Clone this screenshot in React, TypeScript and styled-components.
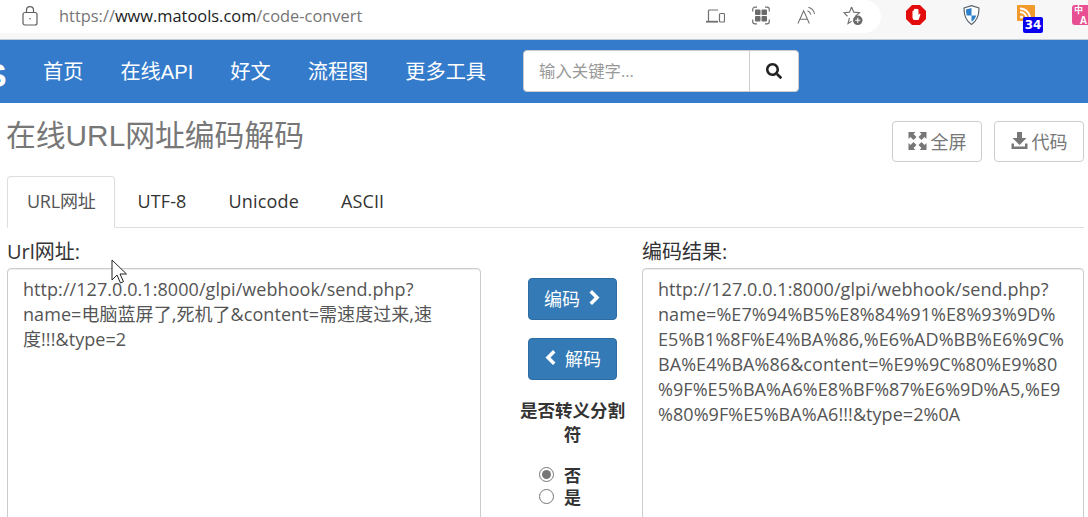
import React from "react";
import styled, { createGlobalStyle } from "styled-components";
import { FaSearch } from "react-icons/fa";

const YAHEI = `"Open Sans", "Noto Sans CJK SC", sans-serif`;
const SEGOE = `"Open Sans", "Noto Sans", sans-serif`;

const Global = createGlobalStyle`
  html, body { margin: 0; padding: 0; background: #fff; }
  * { box-sizing: border-box; }
`;

const Page = styled.div`
  position: relative;
  width: 1088px;
  height: 517px;
  overflow: hidden;
  font-family: ${YAHEI};
  color: #333;
  background: #fff;
`;

const Chrome = styled.div`
  height: 40px;
  display: flex;
  align-items: flex-start;
  background: #f7f7f7;
  border-bottom: 1px solid #c4ccd6;
`;

const AddressBar = styled.div`
  width: 901px;
  height: 33px;
  flex: none;
  margin-left: -20px;
  padding: 0 18px 2px 42px;
  display: flex;
  align-items: center;
  background: #fff;
  border-radius: 0 17px 17px 0;
`;

const Url = styled.div`
  margin-left: 21px;
  flex: 1;
  font: 16.4px ${SEGOE};
  color: #767676;
  white-space: nowrap;
`;

const UrlHost = styled.span`
  color: #1c1c1c;
`;

const BarIcons = styled.div`
  display: flex;
  align-items: center;
  gap: 27px;
`;

const Extensions = styled.div`
  display: flex;
  align-items: flex-start;
  flex: none;
  gap: 37px;
  margin-left: 25px;
  padding-top: 5px;
`;

const RssWrap = styled.div`
  position: relative;
  width: 18px;
  height: 20px;
`;

const Badge = styled.span`
  position: absolute;
  left: 6px;
  top: 12px;
  width: 20px;
  height: 16px;
  border-radius: 2px;
  background: #0a00f0;
  color: #fff;
  font: bold 12px/16px "DejaVu Sans", sans-serif;
  text-align: center;
`;

const Navbar = styled.nav`
  height: 63px;
  display: flex;
  align-items: center;
  background: #347bcb;
  color: #fff;
`;

const Brand = styled.span`
  width: 43px;
  margin-left: -16px;
  flex: none;
  font-family: "Liberation Sans", sans-serif;
  font-size: 34px;
  line-height: 40px;
  font-weight: bold;
  position: relative;
  top: 3px;
`;

const NavLinks = styled.div`
  display: flex;
  gap: 37px;
  width: 480px;
  flex: none;
  margin-left: 16px;
`;

const NavLink = styled.a`
  font-family: "Liberation Sans", "Noto Sans CJK SC", sans-serif;
  font-size: 20.2px;
  line-height: 28px;
  color: #fff;
  white-space: nowrap;
`;

const Search = styled.div`
  display: flex;
  width: 276px;
  height: 42px;
  background: #fff;
  border: 1px solid #ccc;
  border-radius: 4px;
  margin-bottom: 1px;
`;

const SearchInput = styled.div`
  width: 226px;
  padding-left: 15px;
  font-size: 16.4px;
  line-height: 40px;
  color: #999;
  border-right: 1px solid #ccc;
`;

const SearchBtn = styled.div`
  flex: 1;
  display: flex;
  align-items: center;
  justify-content: center;
  color: #222;
  font-size: 16px;
`;

const Main = styled.main`
  padding: 0 4px 0 7px;
`;

const Header = styled.div`
  height: 73px;
  display: flex;
  justify-content: space-between;
  align-items: flex-start;
`;

const Title = styled.h1`
  margin: 13px 0 0 -1px;
  font-family: "Liberation Sans", "Noto Sans CJK SC", sans-serif;
  font-size: 29.8px;
  line-height: 40px;
  font-weight: 400;
  color: #777;
`;

const Actions = styled.div`
  display: flex;
  gap: 12px;
  margin-top: 18px;
`;

const ActionBtn = styled.button`
  width: 90px;
  height: 41px;
  padding: 0 0 2px;
  display: flex;
  align-items: center;
  justify-content: center;
  gap: 4px;
  background: #fff;
  border: 1px solid #ccc;
  border-radius: 4px;
  font: 18px ${YAHEI};
  color: #777;
`;

const Tabs = styled.div`
  height: 52px;
  display: flex;
  gap: 2px;
  border-bottom: 1px solid #ddd;
`;

const Tab = styled.div<{ $active?: boolean }>`
  height: ${(p) => (p.$active ? "52px" : "51px")};
  padding: 0 19px;
  font-size: 18px;
  letter-spacing: ${(p) => (p.$active ? "-0.25px" : "0.15px")};
  line-height: 48px;
  color: ${(p) => (p.$active ? "#555" : "#333")};
  background: #fff;
  border: 1px solid ${(p) => (p.$active ? "#ddd" : "transparent")};
  border-bottom-color: ${(p) => (p.$active ? "#fff" : "transparent")};
  border-radius: 4px 4px 0 0;
`;

const Columns = styled.div`
  display: grid;
  grid-template-columns: 474px 161px 442px;
  margin-top: 10px;
`;

const Field = styled.div`
  display: flex;
  flex-direction: column;
`;

const Label = styled.label`
  height: 30px;
  font-size: 20px;
  line-height: 28px;
  color: #333;
`;

const Output = styled.div`
  height: 300px;
  padding: 8px 15px;
  background: #fff;
  border: 1px solid #ccc;
  border-radius: 4px;
  box-shadow: inset 0 1px 1px rgba(0, 0, 0, 0.075);
  font-size: 18px;
  letter-spacing: 0.06px;
  line-height: 25px;
  color: #555;
  white-space: nowrap;
`;

const Middle = styled.div`
  padding: 40px 36px 0 58px;
  display: flex;
  flex-direction: column;
  align-items: center;
`;

const ConvertBtn = styled.button`
  width: 89px;
  height: 42px;
  margin-bottom: 18px;
  padding: 0 0 3px;
  flex: none;
  display: flex;
  align-items: center;
  justify-content: center;
  gap: 8px;
  background: #337ab7;
  border: 1px solid #2e6da4;
  border-radius: 4px;
  color: #fff;
  font: 18px ${YAHEI};
`;

const EscapeTitle = styled.div`
  width: 110px;
  flex: none;
  font-size: 17.5px;
  line-height: 24px;
  font-weight: bold;
  text-align: center;
`;

const RadioList = styled.div`
  margin-top: 17px;
  width: 67px;
  display: flex;
  flex-direction: column;
`;

const RadioRow = styled.div`
  height: 22px;
  display: flex;
  align-items: center;
  gap: 10px;
  font-size: 17px;
  font-weight: bold;
`;

const Radio = styled.span<{ $checked?: boolean }>`
  width: 15px;
  height: 15px;
  flex: none;
  border-radius: 50%;
  border: 1px solid #767676;
  background: #fff;
  display: flex;
  align-items: center;
  justify-content: center;
  &::after {
    content: "";
    width: 9px;
    height: 9px;
    border-radius: 50%;
    background: ${(p) => (p.$checked ? "#767676" : "transparent")};
  }
`;

const Cursor = styled.svg`
  position: absolute;
  left: 111px;
  top: 259px;
`;

const TranslateTile = styled.div`
  width: 22px;
  height: 20px;
  flex: none;
  padding: 0 0 0 2px;
  border-radius: 3px;
  background: #e84f93;
  color: #fff;
  font-size: 9px;
  line-height: 10px;
  font-weight: bold;
`;

const TileLatin = styled.div`
  padding-left: 6px;
  font-size: 10px;
`;

const Lock = () => (
  <svg width="16" height="20" viewBox="0 0 16 20" fill="none" stroke="#5f5f5f" strokeWidth="1.2">
    <rect x="1" y="6.5" width="14" height="12.5" rx="2" />
    <path d="M4.5 6.5V4.2a3.5 3.5 0 0 1 7 0v2.3" />
    <circle cx="8" cy="12.8" r="0.8" fill="#5f5f5f" stroke="none" />
  </svg>
);

const DevicesIcon = () => (
  <svg width="19" height="14" viewBox="0 0 19 14" fill="none" stroke="#707070" strokeWidth="1.2">
    <path d="M12 1H3.500a1 1 0 0 0-1 1v10" />
    <path d="M0 12.700h12" strokeWidth="1.800" />
    <rect x="13.500" y="4.500" width="5" height="8.500" rx="1" />
  </svg>
);

const AppsIcon = () => (
  <svg width="18" height="19" viewBox="0 0 18 18" fill="none">
    <path d="M5 .7H3A2.3 2.3 0 0 0 .7 3v2M13 .7h2A2.3 2.3 0 0 1 17.300 3v2M5 17.300H3A2.300 2.300 0 0 1 .7 15v-2M13 17.300h2a2.300 2.300 0 0 0 2.300-2.300v-2" stroke="#707070" strokeWidth="1.2" />
    <rect x="3" y="3" width="5.500" height="5.500" rx="1" fill="#6a6a6a" />
    <rect x="9.500" y="3" width="5.500" height="5.500" rx="1" fill="#6a6a6a" />
    <rect x="3" y="9.500" width="5.500" height="5.500" rx="1" fill="#6a6a6a" />
    <rect x="9.500" y="9.500" width="5.500" height="5.500" rx="1" fill="#6a6a6a" />
  </svg>
);

const ReadAloudIcon = () => (
  <svg width="19" height="19" viewBox="0 0 20 19" fill="none" stroke="#707070" strokeWidth="1.100">
    <path d="M1 18 7 4.500 13 18M3.200 13.500h7.600" />
    <path d="M11 4.500a5.500 5.500 0 0 1 3.500 4M12 .8a9 9 0 0 1 6.500 7" />
  </svg>
);

const StarPlusIcon = () => (
  <svg width="20" height="21" viewBox="0 0 21 21" fill="none">
    <path d="M9 1.500 11.300 7l6 .5-4.500 3.900M6.800 13l-.1.300L5.300 18.800 9 16.500M4.700 11.300.9 7.500 6.800 7 9 1.500" stroke="#707070" strokeWidth="1.200" />
    <circle cx="15.500" cy="15.500" r="5" fill="#6a6a6a" />
    <path d="M15.500 12.800v5.400M12.800 15.500h5.400" stroke="#fff" strokeWidth="1.200" />
  </svg>
);

const AdBlockIcon = () => (
  <svg width="20" height="20" viewBox="0 0 20 20">
    <path d="M6 0h8l6 6v8l-6 6H6l-6-6V6z" fill="#e30b0b" />
    <path d="M6.500 10V6.500a1 1 0 0 1 1.500-.8V4.500a1 1 0 0 1 1.500-.4 1 1 0 0 1 1.500.2 1 1 0 0 1 1.500.8v5l.8-1c.7-.7 1.500 0 1 .8L12.500 15H8.500C7 15 6.500 13.500 6.500 12z" fill="#fff" />
  </svg>
);

const ShieldIcon = () => (
  <svg width="17" height="20" viewBox="0 0 16 20">
    <path d="M8 .6 15.400 3c.3 7-1.500 12.500-7.400 16.400C2.100 15.500.3 10 .6 3z" fill="#fff" stroke="#5c6670" strokeWidth="1.200" />
    <path d="M8 3 2.500 4.600c0 2.500.3 4.400.8 5.900H8zM8 10.500v6.300c2.500-1.800 4-3.800 4.700-6.300z" fill="#2f80cc" />
  </svg>
);

const RssIcon = () => (
  <svg width="18" height="18" viewBox="0 0 18 18" style={{ display: "block" }}>
    <rect width="18" height="16" rx="1" fill="#f39a2e" />
    <circle cx="4.500" cy="12" r="1.600" fill="#fff" />
    <path d="M3 7a6.500 6.500 0 0 1 6.500 6.500M3 3.500a10 10 0 0 1 10 10" fill="none" stroke="#fff" strokeWidth="1.800" />
  </svg>
);

const FullscreenIcon = () => (
  <svg width="19" height="18" viewBox="0 0 18 18" fill="#777">
    <path d="M0 0h7L5 2l3 3-3 3-3-3-2 2zM18 0v7l-2-2-3 3-3-3 3-3-2-2zM0 18v-7l2 2 3-3 3 3-3 3 2 2zM18 18h-7l2-2-3-3 3-3 3 3 2-2z" />
  </svg>
);

const DownloadIcon = () => (
  <svg width="17" height="17" viewBox="0 0 16 17" fill="#777">
    <path d="M5.500 0h5v6H15l-7 7-7-7h4.500z" />
    <path d="M0 11.500h2.500v3h11v-3H16V17H0z" />
  </svg>
);

const ChevronRight = () => (
  <svg width="13" height="15" viewBox="0 0 13 15" fill="#fff">
    <path d="M0 2.500 2.500 0l7.500 7.500L2.500 15 0 12.500l5-5z" transform="translate(1.500 0)" />
  </svg>
);

const ChevronLeft = () => (
  <svg width="13" height="15" viewBox="0 0 13 15" fill="#fff">
    <path d="M10 2.500 7.500 0 0 7.500 7.500 15l2.500-2.500-5-5z" transform="translate(1.500 0)" />
  </svg>
);

const NAV = ["首页", "在线API", "好文", "流程图", "更多工具"];
const TABS = ["URL网址", "UTF-8", "Unicode", "ASCII"];
const RESULT = [
  "http://127.0.0.1:8000/glpi/webhook/send.php?",
  "name=%E7%94%B5%E8%84%91%E8%93%9D%",
  "E5%B1%8F%E4%BA%86,%E6%AD%BB%E6%9C%",
  "BA%E4%BA%86&content=%E9%9C%80%E9%80",
  "%9F%E5%BA%A6%E8%BF%87%E6%9D%A5,%E9",
  "%80%9F%E5%BA%A6!!!&type=2%0A",
];
const SOURCE = [
  "http://127.0.0.1:8000/glpi/webhook/send.php?",
  "name=电脑蓝屏了,死机了&content=需速度过来,速",
  "度!!!&type=2",
];

export default function App() {
  return (
    <Page>
      <Global />
      <Chrome>
        <AddressBar>
          <Lock />
          <Url>
            https://<UrlHost>www.matools.com</UrlHost>/code-convert
          </Url>
          <BarIcons>
            <DevicesIcon />
            <AppsIcon />
            <ReadAloudIcon />
            <StarPlusIcon />
          </BarIcons>
        </AddressBar>
        <Extensions>
          <AdBlockIcon />
          <ShieldIcon />
          <RssWrap>
            <RssIcon />
            <Badge>34</Badge>
          </RssWrap>
          <TranslateTile>
            中<TileLatin>A</TileLatin>
          </TranslateTile>
        </Extensions>
      </Chrome>
      <Navbar>
        <Brand>S</Brand>
        <NavLinks>
          {NAV.map((n) => (
            <NavLink key={n}>{n}</NavLink>
          ))}
        </NavLinks>
        <Search>
          <SearchInput>输入关键字...</SearchInput>
          <SearchBtn>
            <FaSearch />
          </SearchBtn>
        </Search>
      </Navbar>
      <Main>
        <Header>
          <Title>在线URL网址编码解码</Title>
          <Actions>
            <ActionBtn>
              <FullscreenIcon />
              全屏
            </ActionBtn>
            <ActionBtn>
              <DownloadIcon />
              代码
            </ActionBtn>
          </Actions>
        </Header>
        <Tabs>
          {TABS.map((t, i) => (
            <Tab key={t} $active={i === 0}>
              {t}
            </Tab>
          ))}
        </Tabs>
        <Columns>
          <Field>
            <Label>Url网址:</Label>
            <Output>
              {SOURCE.map((l) => (
                <div key={l}>{l}</div>
              ))}
            </Output>
          </Field>
          <Middle>
            <ConvertBtn>
              编码
              <ChevronRight />
            </ConvertBtn>
            <ConvertBtn>
              <ChevronLeft />
              解码
            </ConvertBtn>
            <EscapeTitle>是否转义分割符</EscapeTitle>
            <RadioList>
              <RadioRow>
                <Radio $checked />否
              </RadioRow>
              <RadioRow>
                <Radio />是
              </RadioRow>
            </RadioList>
          </Middle>
          <Field>
            <Label>编码结果:</Label>
            <Output>
              {RESULT.map((l) => (
                <div key={l}>{l}</div>
              ))}
            </Output>
          </Field>
        </Columns>
      </Main>
      <Cursor width="16" height="26" viewBox="0 0 16 26">
        <path d="M1 1v20l5-5 3.500 8 3-1.300L9 15h6.500z" fill="#fff" stroke="#222" strokeWidth="1" />
      </Cursor>
    </Page>
  );
}
